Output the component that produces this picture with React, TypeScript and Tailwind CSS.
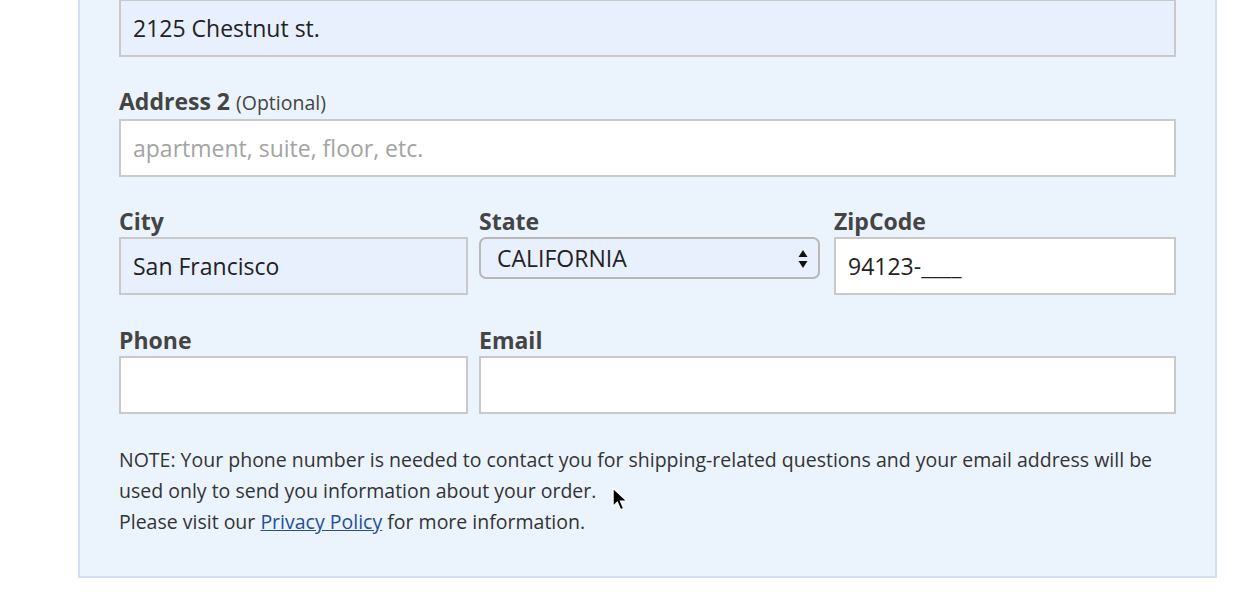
import React from "react";

const font = { fontFamily: '"Open Sans", "Noto Sans", sans-serif' };

const Label: React.FC<{ children: React.ReactNode }> = ({ children }) => (
  <div className="mb-[1px] text-[23px] font-bold leading-[30px] text-[#444]">{children}</div>
);

const Field: React.FC<{ value?: string; placeholder?: string; filled?: boolean }> = ({
  value,
  placeholder,
  filled,
}) => (
  <input
    readOnly
    value={value ?? ""}
    placeholder={placeholder}
    className={`block h-[58px] w-full border-2 border-[#c9c9c9] px-[12px] text-[23px] text-[#222] outline-none placeholder:text-[#a3a3a3] ${
      filled ? "bg-[#e8f0fe]" : "bg-white"
    }`}
  />
);

const App: React.FC = () => {
  return (
    <div className="relative h-[599px] w-[1240px] overflow-hidden bg-white" style={font}>
      {/* Form panel */}
      <div className="ml-[78px] mt-[-63px] w-[1139px] border-2 border-[#d4dff0] bg-[#ebf3fd] px-[39px] pb-[39px] pt-[29px]">
        <Label>Address</Label>
        <Field value="2125 Chestnut st." filled />

        <div className="mt-[29px]">
          <Label>
            Address 2 <span className="text-[19.5px] font-normal">(Optional)</span>
          </Label>
          <Field placeholder="apartment, suite, floor, etc." />
        </div>

        <div className="mt-[29px] flex">
          <div className="w-[349px]">
            <Label>City</Label>
            <Field value="San Francisco" filled />
          </div>
          <div className="ml-[11px] w-[341px]">
            <Label>State</Label>
            <div className="relative flex h-[42px] items-center rounded-[7px] border-2 border-[#b8b8b8] bg-[#e8f0fe] pl-[16px] text-[23px] text-[#222]">
              CALIFORNIA
              <svg className="absolute right-[10px] top-[10px]" width="10" height="20" viewBox="0 0 10 20">
                <path d="M5 1 L9.5 8 L0.5 8 Z" fill="#111" />
                <path d="M5 19 L9.5 12 L0.5 12 Z" fill="#111" />
              </svg>
            </div>
          </div>
          <div className="ml-[14px] w-[342px]">
            <Label>ZipCode</Label>
            <Field value="94123-____" />
          </div>
        </div>

        <div className="mt-[30px] flex">
          <div className="w-[349px]">
            <Label>Phone</Label>
            <Field />
          </div>
          <div className="ml-[11px] w-[697px]">
            <Label>Email</Label>
            <Field />
          </div>
        </div>

        <div className="mt-[30px] text-[19.5px] leading-[31px] text-[#333]">
          <p>
            NOTE: Your phone number is needed to contact you for shipping-related questions and your email
            address will be used only to send you information about your order.
          </p>
          <p>
            Please visit our{" "}
            <a href="#" className="text-[#1f4f99] underline">
              Privacy Policy
            </a>{" "}
            for more information.
          </p>
        </div>
      </div>

      {/* mouse pointer */}
      <svg className="absolute left-[612px] top-[487px]" width="17" height="26" viewBox="0 0 16 24">
        <path d="M1 1 L1 18 L5 14 L8 21 L11 20 L8 13 L14 13 Z" fill="#000" stroke="#fff" strokeWidth="1.2" />
      </svg>
    </div>
  );
};

export default App;
